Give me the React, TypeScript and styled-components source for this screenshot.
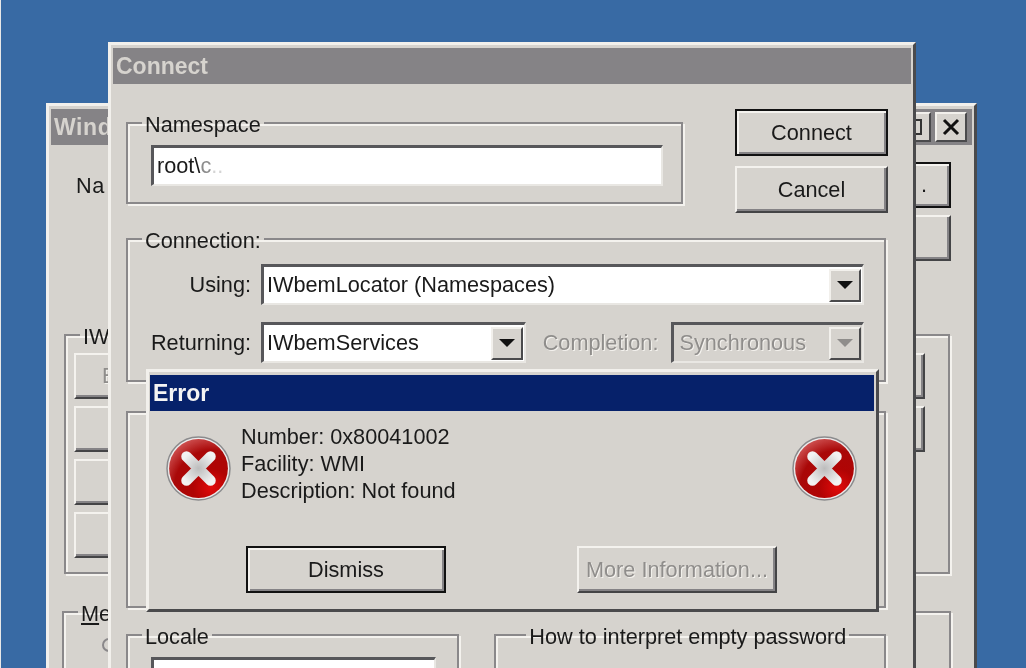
import React, { useId } from 'react';
import styled, { createGlobalStyle } from 'styled-components';

const GlobalStyle = createGlobalStyle`
  html, body {
    margin: 0;
    padding: 0;
    overflow: hidden;
    background: #386aa4;
  }
  * {
    box-sizing: border-box;
  }
`;

const Desktop = styled.div`
  position: relative;
  width: 1026px;
  height: 668px;
  overflow: hidden;
  background: #386aa4;
  border-left: 1px solid #e8e8e8;
  font-family: 'Liberation Sans', Arial, sans-serif;
  font-size: 21.7px;
  color: #1a1a1a;
  filter: blur(0.7px);
`;

const Window = styled.div<{ $left: number; $top: number; $width: number; $height: number }>`
  position: absolute;
  left: ${({ $left }) => $left}px;
  top: ${({ $top }) => $top}px;
  width: ${({ $width }) => $width}px;
  height: ${({ $height }) => $height}px;
  display: flex;
  flex-direction: column;
  background: #d6d3ce;
  border-style: solid;
  border-width: 3px;
  border-color: #f2f0ec #4a4a4c #4a4a4c #f2f0ec;
  padding: 3px 2px 3px 2px;
`;

const ErrorWindow = styled(Window)`
  padding: 3px 2px 3px 1px;
`;

const TitleBar = styled.div<{ $active?: boolean }>`
  flex: none;
  height: 36px;
  display: flex;
  align-items: center;
  justify-content: space-between;
  padding: 0 3px;
  background: ${({ $active }) => ($active ? '#06216a' : '#858386')};
  color: ${({ $active }) => ($active ? '#f4f4f4' : '#d6d3ce')};
  font-size: 23px;
  font-weight: bold;
  white-space: nowrap;
`;

const BackTitle = styled.span`
  letter-spacing: 0.6px;
`;

const WindowControls = styled.div`
  display: flex;
  gap: 4px;
  margin-right: 2px;
`;

const ControlButton = styled.div`
  width: 32px;
  height: 30px;
  display: flex;
  align-items: center;
  justify-content: center;
  background: #d6d3ce;
  border-style: solid;
  border-width: 2px;
  border-color: #f2f0ec #4a4a4c #4a4a4c #f2f0ec;
`;

const Group = styled.fieldset<{ $width?: number }>`
  margin: 0;
  min-width: 0;
  ${({ $width }) => ($width ? `width: ${$width}px;` : '')}
  border: 2px solid #8a888a;
  box-shadow: 2px 2px 0 #f4f2ee, inset 2px 2px 0 #f4f2ee;
`;

const GroupLegend = styled.legend`
  margin-left: 14px;
  padding: 4px 3px 0;
  height: 25px;
  line-height: 21px;
  font-size: 21.7px;
  white-space: nowrap;
`;

const Bevel = styled.button<{ $primary?: boolean }>`
  flex: none;
  padding: 0;
  height: 47px;
  font: inherit;
  color: #1a1a1a;
  background: #d6d3ce;
  border-style: solid;
  border-width: 2px;
  border-color: ${({ $primary }) =>
    $primary ? '#111' : '#f4f2ee #444446 #444446 #f4f2ee'};
  box-shadow: ${({ $primary }) =>
    $primary
      ? 'inset 2px 2px 0 #f4f2ee, inset -2px -2px 0 #858386'
      : 'inset -2px -2px 0 #858386'};
  white-space: nowrap;

  &:disabled {
    color: #8f8d8b;
    text-shadow: 1px 1px 0 #f4f2ee;
  }
`;

const ConnectButton = styled(Bevel)`
  width: 153px;
`;

const BackTopButton = styled(Bevel)`
  width: 164px;
  height: 46px;
  padding-left: 132px;
  text-align: left;
`;

const BackGridButton = styled(Bevel)`
  height: 46px;
  padding-left: 26px;
  text-align: left;
`;

const DialogButton = styled(Bevel)`
  width: 200px;
`;

/* back window */

const BackBody = styled.div`
  flex: 1;
  min-height: 0;
  padding: 17px 22px 0 13px;
`;

const BackTop = styled.div`
  display: flex;
  justify-content: space-between;
  align-items: flex-start;
  margin-right: -1px;
`;

const BackLabel = styled.div`
  margin: 11px 0 0 12px;
  line-height: 25px;
  letter-spacing: 0.5px;
`;

const ButtonColumn = styled.div`
  display: flex;
  flex-direction: column;
  align-items: flex-end;
  gap: 10px;
`;

const BackColumn = styled(ButtonColumn)`
  gap: 7px;
`;

const ServicesGroup = styled(Group)`
  margin-top: 61px;
  padding: 6px 23px 14px 0;
`;

const ServicesGrid = styled.div`
  display: grid;
  margin-left: 8px;
  grid-template-rows: repeat(4, 46px);
  grid-template-columns: 215px repeat(3, 1fr);
  grid-auto-flow: column;
  gap: 7px 16px;
`;

const MethodGroup = styled(Group)`
  margin: 25px -1px 0 -2px;
  padding: 10px 12px 30px 0;
`;

const Radio = styled.span`
  display: block;
  width: 14px;
  height: 14px;
  margin: 4px 0 0 38px;
  border: 2px solid #8a888a;
  border-radius: 50%;
`;

const Underlined = styled.span`
  text-decoration: underline;
`;

/* front window */

const FrontBody = styled.div`
  flex: 1;
  min-height: 0;
  display: flex;
  flex-direction: column;
  padding: 25px 23px 0 13px;
`;

const FrontTop = styled.div`
  display: flex;
  align-items: flex-start;
  gap: 52px;
  margin-bottom: 13px;
`;

const NamespaceGroup = styled(Group)`
  margin-top: 1px;
  padding: 10px 18px 16px 23px;

  legend {
    margin-left: -9px;
  }
`;

const Sunken = styled.div<{ $width?: number; $disabled?: boolean }>`
  display: flex;
  align-items: center;
  justify-content: space-between;
  height: 41px;
  ${({ $width }) => ($width ? `width: ${$width}px;` : '')}
  padding: 0 1px 0 ${({ $disabled }) => ($disabled ? 5 : 3)}px;
  background: ${({ $disabled }) => ($disabled ? '#d6d3ce' : '#ffffff')};
  border-style: solid;
  border-width: 3px 2px 2px 3px;
  border-color: #57575a #e9e7e3 #e9e7e3 #57575a;
  color: ${({ $disabled }) => ($disabled ? '#8f8d8b' : '#1a1a1a')};
  ${({ $disabled }) => ($disabled ? 'text-shadow: 1px 1px 0 #f4f2ee;' : '')}
  white-space: nowrap;
`;

const FadedChar = styled.span`
  color: #8c8c8c;
`;

const FadedTail = styled.span`
  color: #d4d4d4;
`;

const ComboArrow = styled.span`
  flex: none;
  width: 32px;
  height: 33px;
  display: flex;
  align-items: center;
  justify-content: center;
  background: #d6d3ce;
  border-style: solid;
  border-width: 2px;
  border-color: #f2f0ec #4a4a4c #4a4a4c #f2f0ec;
`;

const ArrowGlyph = styled.span<{ $disabled?: boolean }>`
  width: 0;
  height: 0;
  border-left: 8px solid transparent;
  border-right: 8px solid transparent;
  border-top: 8px solid ${({ $disabled }) => ($disabled ? '#8f8d8b' : '#111')};
`;

const ConnectionGroup = styled(Group)`
  padding: 13px 20px 17px 0;
`;

const ConnectionRows = styled.div`
  display: flex;
  flex-direction: column;
  gap: 17px;
`;

const FieldRow = styled.div`
  display: flex;
  align-items: center;
`;

const FieldLabel = styled.span`
  width: 133px;
  flex: none;
  padding-right: 10px;
  text-align: right;
  white-space: nowrap;
`;

const Completion = styled.span`
  width: 145px;
  flex: none;
  padding-right: 13px;
  text-align: right;
  color: #8f8d8b;
  text-shadow: 1px 1px 0 #f4f2ee;
`;

const CredentialsGroup = styled(Group)`
  margin-top: 17px;
  height: 212px;
`;

const BottomRow = styled.div`
  display: flex;
  align-items: flex-start;
  gap: 35px;
  margin-top: 14px;
`;

const LocaleGroup = styled(Group)`
  padding: 10px 21px 16px 23px;

  legend {
    margin-left: -9px;
  }
`;

const PasswordGroup = styled(Group)`
  height: 90px;
`;

/* error dialog */

const DialogBody = styled.div`
  flex: 1;
  padding: 25px 17px 0 16px;
`;

const ErrorRow = styled.div`
  display: flex;
  height: 64px;
`;

const ErrorText = styled.div`
  flex: 1;
  margin: -13px 0 0 10px;
  line-height: 27px;
`;

const DialogActions = styled.div`
  display: flex;
  gap: 131px;
  margin: 46px 0 0 80px;
`;

const ErrorIcon: React.FC = () => {
  const id = useId();
  return (
    <svg width="65" height="65" viewBox="0 0 65 65">
      <defs>
        <radialGradient id={`${id}-red`} cx="0.72" cy="0.82" r="0.9">
          <stop offset="0" stopColor="#e20a0a" />
          <stop offset="0.35" stopColor="#b00404" />
          <stop offset="0.7" stopColor="#a90808" />
          <stop offset="1" stopColor="#cf5252" />
        </radialGradient>
        <radialGradient id={`${id}-x`} gradientUnits="userSpaceOnUse" cx="32.5" cy="32.5" r="18">
          <stop offset="0" stopColor="#bcbcbc" />
          <stop offset="0.6" stopColor="#dcdcdc" />
          <stop offset="1" stopColor="#f2f2f2" />
        </radialGradient>
      </defs>
      <circle cx="32.5" cy="32.5" r="31.5" fill="#ecebeb" stroke="#8b8b8d" strokeWidth="1.5" />
      <circle cx="32.5" cy="32.5" r="29.4" fill={`url(#${id}-red)`} />
      <path
        d="M20.5 20.5 L44.5 44.5 M44.5 20.5 L20.5 44.5"
        stroke={`url(#${id}-x)`}
        strokeWidth="10.5"
        strokeLinecap="round"
        fill="none"
      />
    </svg>
  );
};

// only the part of the back window that sticks out from behind the front one has text
const serviceButtons = ['E', '', '', '', '', '', '', '', '', '', '', '', '', ''];

export default function App() {
  return (
    <>
      <GlobalStyle />
      <Desktop>
        <Window $left={45} $top={103} $width={931} $height={640}>
          <TitleBar>
            <BackTitle>Wind</BackTitle>
            <WindowControls>
              <ControlButton>
                <svg width="14" height="16" viewBox="0 0 14 16">
                  <rect x="1" y="1" width="12" height="14" fill="none" stroke="#333" strokeWidth="2" />
                </svg>
              </ControlButton>
              <ControlButton>
                <svg width="18" height="18" viewBox="0 0 18 18">
                  <path d="M2 2 L16 16 M16 2 L2 16" stroke="#111" strokeWidth="3" fill="none" />
                </svg>
              </ControlButton>
            </WindowControls>
          </TitleBar>
          <BackBody>
            <BackTop>
              <BackLabel>Na</BackLabel>
              <BackColumn>
                <BackTopButton $primary>.</BackTopButton>
                <BackTopButton />
              </BackColumn>
            </BackTop>
            <ServicesGroup>
              <GroupLegend>IW</GroupLegend>
              <ServicesGrid>
                {serviceButtons.map((label, index) => (
                  <BackGridButton key={index} disabled>
                    {label}
                  </BackGridButton>
                ))}
              </ServicesGrid>
            </ServicesGroup>
            <MethodGroup>
              <GroupLegend>
                <Underlined>M</Underlined>e
              </GroupLegend>
              <Radio />
            </MethodGroup>
          </BackBody>
        </Window>

        <Window $left={107} $top={42} $width={808} $height={680}>
          <TitleBar>Connect</TitleBar>
          <FrontBody>
            <FrontTop>
              <NamespaceGroup $width={558}>
                <GroupLegend>Namespace</GroupLegend>
                <Sunken>
                  <span>
                    root\<FadedChar>c</FadedChar>
                    <FadedTail>..</FadedTail>
                  </span>
                </Sunken>
              </NamespaceGroup>
              <ButtonColumn>
                <ConnectButton $primary>Connect</ConnectButton>
                <ConnectButton>Cancel</ConnectButton>
              </ButtonColumn>
            </FrontTop>

            <ConnectionGroup $width={760}>
              <GroupLegend>Connection:</GroupLegend>
              <ConnectionRows>
                <FieldRow>
                  <FieldLabel>Using:</FieldLabel>
                  <Sunken $width={604}>
                    <span>IWbemLocator (Namespaces)</span>
                    <ComboArrow>
                      <ArrowGlyph />
                    </ComboArrow>
                  </Sunken>
                </FieldRow>
                <FieldRow>
                  <FieldLabel>Returning:</FieldLabel>
                  <Sunken $width={266}>
                    <span>IWbemServices</span>
                    <ComboArrow>
                      <ArrowGlyph />
                    </ComboArrow>
                  </Sunken>
                  <Completion>Completion:</Completion>
                  <Sunken $width={193} $disabled>
                    <span>Synchronous</span>
                    <ComboArrow>
                      <ArrowGlyph $disabled />
                    </ComboArrow>
                  </Sunken>
                </FieldRow>
              </ConnectionRows>
            </ConnectionGroup>

            <CredentialsGroup $width={760}>
              <GroupLegend>&nbsp;</GroupLegend>
            </CredentialsGroup>

            <BottomRow>
              <LocaleGroup $width={333}>
                <GroupLegend>Locale</GroupLegend>
                <Sunken />
              </LocaleGroup>
              <PasswordGroup $width={392}>
                <GroupLegend>How to interpret empty password</GroupLegend>
              </PasswordGroup>
            </BottomRow>
          </FrontBody>
        </Window>

        <ErrorWindow $left={145} $top={369} $width={733} $height={243}>
          <TitleBar $active>Error</TitleBar>
          <DialogBody>
            <ErrorRow>
              <ErrorIcon />
              <ErrorText>
                <div>Number: 0x80041002</div>
                <div>Facility: WMI</div>
                <div>Description: Not found</div>
              </ErrorText>
              <ErrorIcon />
            </ErrorRow>
            <DialogActions>
              <DialogButton $primary>Dismiss</DialogButton>
              <DialogButton disabled>More Information...</DialogButton>
            </DialogActions>
          </DialogBody>
        </ErrorWindow>
      </Desktop>
    </>
  );
}
